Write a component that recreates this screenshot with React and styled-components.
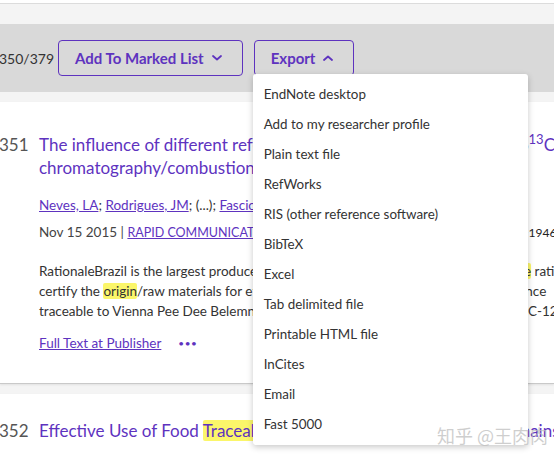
import React from "react";
import styled, { createGlobalStyle } from "styled-components";

const purple = "#5e33bf";

const exportOptions = [
  "EndNote desktop",
  "Add to my researcher profile",
  "Plain text file",
  "RefWorks",
  "RIS (other reference software)",
  "BibTeX",
  "Excel",
  "Tab delimited file",
  "Printable HTML file",
  "InCites",
  "Email",
  "Fast 5000",
];

const Chevron = ({ up }) => (
  <ChevronBox>
    <svg width="10" height="6" viewBox="0 0 10 6">
      <polyline
        points={up ? "1,5 5,1.5 9,5" : "1,1 5,4.5 9,1"}
        fill="none"
        stroke={purple}
        strokeWidth="1.8"
        strokeLinecap="round"
        strokeLinejoin="round"
      />
    </svg>
  </ChevronBox>
);

const App = () => {
  return (
    <>
      <GlobalStyle />
      <Page>
        <TopStrip />
        <Toolbar>
          <Counter>350/379</Counter>
          <OutlineButton>
            Add To Marked List
            <Chevron />
          </OutlineButton>
          <ExportWrap>
            <OutlineButton>
              Export
              <Chevron up />
            </OutlineButton>
            <Menu>
              {exportOptions.map((label) => (
                <MenuItem key={label}>{label}</MenuItem>
              ))}
            </Menu>
          </ExportWrap>
        </Toolbar>

        <Card $top={31}>
          <RecordNumber>351</RecordNumber>
          <RecordBody>
            <Title>
              The influence of different reference standards on ethanol
              assays δ<sup>13</sup>C values by gas
              <br />
              chromatography/combustion/isotope ratio mass spectrometry
            </Title>
            <Authors>
              <a>Neves, LA</a>; <a>Rodrigues, JM</a>; (...); <a>Fasciotti, M</a>
            </Authors>
            <Meta>
              Nov 15 2015 | <Journal>RAPID COMMUNICATIONS IN MASS SPECTROMETRY</Journal>{" "}
              29 (21) , 1939-<Pages>1946</Pages>
            </Meta>
            <Abstract>
              RationaleBrazil is the largest producer of sugarcane ethanol and
              needed the <Mark>isotope</Mark> ratio
              <br />
              certify the <Mark>origin</Mark>/raw materials for ethanol
              production with an isotope ratio difference
              <br />
              traceable to Vienna Pee Dee Belemnite scale using the relative
              abundance of C-13 C-12
            </Abstract>
            <Actions>
              <a>Full Text at Publisher</a>
              <Dots>•••</Dots>
            </Actions>
          </RecordBody>
        </Card>

        <Card $top={25}>
          <RecordNumber>352</RecordNumber>
          <RecordBody>
            <Title>
              Effective Use of Food <Mark>Traceability</Mark> in Cereal Grains
              Food Supply Chains
            </Title>
          </RecordBody>
        </Card>

        <Watermark>知乎 @王肉肉</Watermark>
      </Page>
    </>
  );
};

export default App;

const GlobalStyle = createGlobalStyle`
  html, body {
    margin: 0;
    padding: 0;
    background: #f4f4f4;
    overflow: hidden;
  }
  body {
    font-family: Lato, "Noto Sans", sans-serif;
    color: #333;
  }
  * {
    box-sizing: border-box;
  }
`;

const Page = styled.div`
  position: relative;
  width: 554px;
  height: 458px;
  overflow: hidden;
`;

const TopStrip = styled.div`
  height: 4px;
  background: #fff;
  border-bottom: 1px solid #dcdcdc;
  margin-bottom: 20px;
`;

const Toolbar = styled.div`
  height: 68px;
  background: #d9d9d9;
  display: flex;
  align-items: center;
  gap: 11px;
`;

const Counter = styled.span`
  font-size: 14px;
  color: #333;
  margin-left: -1px;
  width: 48px;
`;

const OutlineButton = styled.button`
  display: flex;
  align-items: center;
  gap: 5px;
  height: 36px;
  padding: 0 17px 0 16px;
  border: 1px solid ${purple};
  border-radius: 4px;
  background: transparent;
  color: ${purple};
  font-family: Lato, "Noto Sans", sans-serif;
  font-size: 15px;
  font-weight: 700;
  cursor: pointer;
`;

const ChevronBox = styled.span`
  display: inline-flex;
  width: 16px;
  justify-content: center;
  align-items: center;
`;

const ExportWrap = styled.div`
  position: relative;
`;

const Menu = styled.ul`
  position: absolute;
  top: 34px;
  left: -1px;
  width: 275px;
  margin: 0;
  padding: 5px 0 6px;
  list-style: none;
  background: #fff;
  border-radius: 3px;
  box-shadow: 0 2px 6px rgba(0, 0, 0, 0.22);
  z-index: 5;
`;

const MenuItem = styled.li`
  height: 30px;
  display: flex;
  align-items: center;
  padding: 0 11px;
  font-size: 13.4px;
  color: #333;
  cursor: pointer;
`;

const Card = styled.div`
  margin-top: 10px;
  background: #fff;
  display: flex;
  gap: 15px;
  padding-top: ${({ $top }) => $top}px;
  min-height: 282px;
  border-bottom: 1px solid #c9c9c9;
  box-shadow: 0 1px 2px rgba(0, 0, 0, 0.08);

  & + & {
    min-height: 0;
    height: 80px;
  }
`;

const RecordNumber = styled.div`
  font-size: 17px;
  color: #555;
  line-height: 24px;
  width: 25px;
  margin-left: -1px;
  flex-shrink: 0;
`;

const RecordBody = styled.div`
  flex: 1;
  white-space: nowrap;
  font-size: 13.5px;

  a {
    color: ${purple};
    text-decoration: underline;
    cursor: pointer;
  }
`;

const Title = styled.div`
  font-size: 17px;
  line-height: 23px;
  color: ${purple};

  sup {
    font-size: 13px;
    line-height: 0;
  }
`;

const Authors = styled.div`
  margin-top: 16px;
  line-height: 20px;
  color: #333;
`;

const Meta = styled.div`
  margin-top: 7px;
  line-height: 20px;
  color: #444;
`;

const Journal = styled.a`
  font-size: 12.5px;
`;

const Pages = styled.span`
  color: #222;
  font-size: 12px;
`;

const Abstract = styled.div`
  margin-top: 18px;
  line-height: 20px;
  color: #333;
`;

const Mark = styled.span`
  background: #fbf66a;
  border-radius: 2px;
`;

const Actions = styled.div`
  margin-top: 12px;
  line-height: 20px;
  display: flex;
  align-items: center;
  gap: 17px;
`;

const Dots = styled.span`
  color: ${purple};
  font-size: 10px;
  letter-spacing: 0.5px;
`;

const Watermark = styled.div`
  position: absolute;
  left: 437px;
  top: 422px;
  font-family: "Noto Sans CJK SC", sans-serif;
  font-size: 18px;
  color: rgba(190, 190, 190, 0.75);
  z-index: 10;
  pointer-events: none;
`;
